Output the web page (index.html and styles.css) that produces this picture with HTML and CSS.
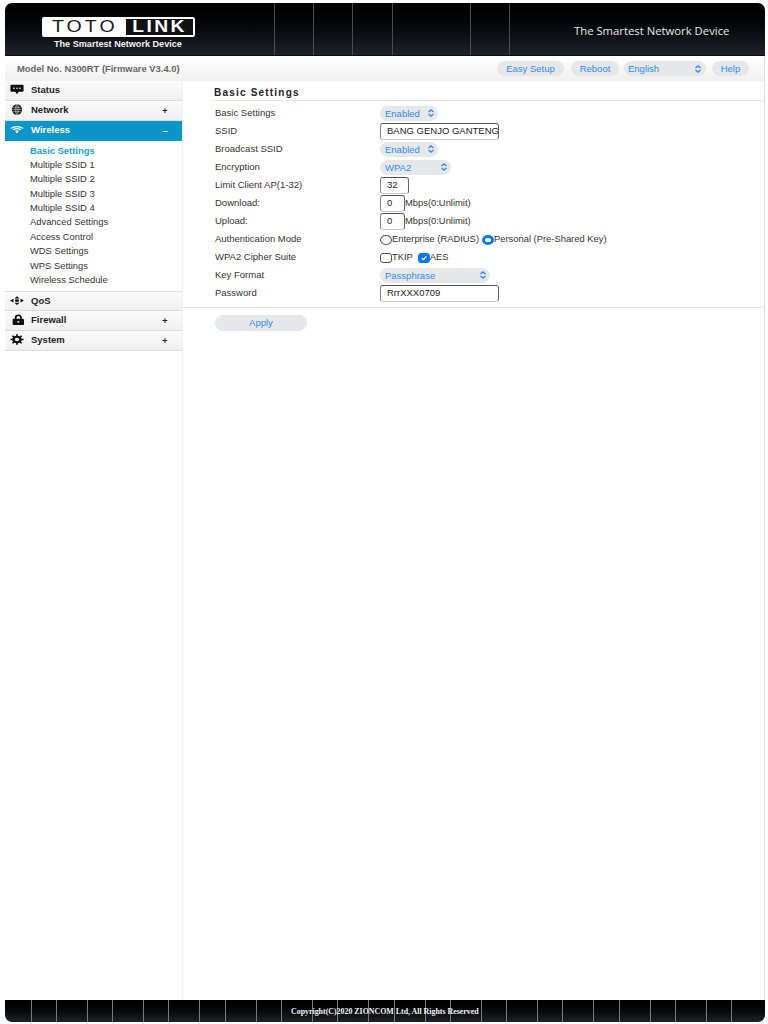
FILE: index.html
```html
<!DOCTYPE html>
<html lang="en">
<head>
<meta charset="utf-8">
<title>TOTOLINK N300RT</title>
<link rel="stylesheet" href="styles.css">
</head>
<body>
<div class="page">
  <header class="header">
    <div class="brand">
      <div class="logo"><span class="logo-toto">TOTO</span><span class="logo-link"><span class="logo-link-text">LINK</span></span></div>
      <div class="brand-tag">The Smartest Network Device</div>
    </div>
    <div class="header-lines"><i></i><i></i><i></i><i></i><i class="double"></i><i></i></div>
    <div class="header-tag">The Smartest Network Device</div>
  </header>

  <div class="toolbar">
    <div class="model">Model No. N300RT (Firmware V3.4.0)</div>
    <div class="actions">
      <span class="pill pill-setup">Easy Setup</span>
      <span class="pill pill-reboot">Reboot</span>
      <span class="pill pill-lang">English<svg class="updown" viewBox="0 0 8 8"><path d="M1.500 3 4 1l2.500 2M1.500 5 4 7l2.500-2"/></svg></span>
      <span class="pill pill-help">Help</span>
    </div>
  </div>

  <div class="main">
    <nav class="sidebar">
      <div class="nav-item">
        <svg class="nav-icon" viewBox="0 0 16 14" preserveAspectRatio="none"><path class="fill" d="M1.500 1h13a1 1 0 0 1 1 1v7a1 1 0 0 1-1 1H10l-2 3-2-3H1.500a1 1 0 0 1-1-1V2a1 1 0 0 1 1-1z"/><circle class="hole" cx="4.500" cy="5.500" r="1"/><circle class="hole" cx="8" cy="5.500" r="1"/><circle class="hole" cx="11.500" cy="5.500" r="1"/></svg>
        <span class="nav-label">Status</span>
      </div>
      <div class="nav-item">
        <svg class="nav-icon" viewBox="0 0 16 16" preserveAspectRatio="xMidYMid meet"><circle class="fill" cx="8" cy="8" r="7.500"/><path class="grid" d="M.5 8h15M1.300 4.800h13.400M1.300 11.200h13.400M8 .5v15M8 .5C4.500 4 4.500 12 8 15.500M8 .5c3.500 3.500 3.500 11.500 0 15"/></svg>
        <span class="nav-label">Network</span><span class="nav-sign">+</span>
      </div>
      <div class="nav-item nav-active">
        <svg class="nav-icon" viewBox="0 0 16 12" preserveAspectRatio="none"><g transform="translate(0 1.500) scale(1 .72)"><path class="wifi" d="M1 4.500C5 1 11 1 15 4.500M3.500 6.700c2.700-2 6.300-2 9 0M6 8.900c1.300-.8 2.700-.8 4 0"/><circle class="wifi-dot" cx="8" cy="10.600" r="1.200"/></g></svg>
        <span class="nav-label">Wireless</span><span class="nav-sign">–</span>
      </div>
      <ul class="submenu">
        <li class="current">Basic Settings</li>
        <li>Multiple SSID 1</li>
        <li>Multiple SSID 2</li>
        <li>Multiple SSID 3</li>
        <li>Multiple SSID 4</li>
        <li>Advanced Settings</li>
        <li>Access Control</li>
        <li>WDS Settings</li>
        <li>WPS Settings</li>
        <li>Wireless Schedule</li>
      </ul>
      <div class="nav-item nav-first">
        <svg class="nav-icon" viewBox="0 0 16 14" preserveAspectRatio="none"><g transform="translate(0 1.500) scale(1 .8)"><path class="fill" d="M8 0l3 3.500H5zM8 14l-3-3.500h6zM0 7l4-3v6zM16 7l-4-3v6z"/><rect class="fill" x="6" y="5" width="4" height="4"/></g></svg>
        <span class="nav-label">QoS</span>
      </div>
      <div class="nav-item">
        <svg class="nav-icon" viewBox="0 0 16 14" preserveAspectRatio="none"><path class="ring" d="M6.500 7V4.500a3 3 0 0 1 6 0V7"/><rect class="fill" x="3" y="6" width="13" height="8" rx="1"/><circle class="hole" cx="9.500" cy="10" r="1.200"/></svg>
        <span class="nav-label">Firewall</span><span class="nav-sign">+</span>
      </div>
      <div class="nav-item">
        <svg class="nav-icon" viewBox="0 0 16 16" preserveAspectRatio="none"><path class="gear" d="M8 2.500a5.500 5.500 0 1 0 0 11 5.500 5.500 0 0 0 0-11z"/><path class="teeth" d="M8 .5v3M8 12.500v3M.5 8h3M12.500 8h3M2.700 2.700l2.100 2.100M11.200 11.200l2.100 2.100M13.300 2.700l-2.100 2.100M4.800 11.200l-2.100 2.100"/><circle class="hole" cx="8" cy="8" r="2.500"/></svg>
        <span class="nav-label">System</span><span class="nav-sign">+</span>
      </div>
    </nav>

    <main class="content">
      <h1 class="title">Basic Settings</h1>
      <form class="form">
        <div class="row"><span class="label">Basic Settings</span><span class="select sel-short">Enabled<svg class="updown" viewBox="0 0 8 8"><path d="M1.500 3 4 1l2.500 2M1.500 5 4 7l2.500-2"/></svg></span></div>
        <div class="row"><span class="label">SSID</span><span class="input input-wide">BANG GENJO GANTENG</span></div>
        <div class="row"><span class="label">Broadcast SSID</span><span class="select sel-short">Enabled<svg class="updown" viewBox="0 0 8 8"><path d="M1.500 3 4 1l2.500 2M1.500 5 4 7l2.500-2"/></svg></span></div>
        <div class="row"><span class="label">Encryption</span><span class="select sel-mid">WPA2<svg class="updown" viewBox="0 0 8 8"><path d="M1.500 3 4 1l2.500 2M1.500 5 4 7l2.500-2"/></svg></span></div>
        <div class="row"><span class="label">Limit Client AP(1-32)</span><span class="input input-limit">32</span></div>
        <div class="row"><span class="label">Download:</span><span class="input input-num">0</span><span class="text">Mbps(0:Unlimit)</span></div>
        <div class="row"><span class="label">Upload:</span><span class="input input-num">0</span><span class="text">Mbps(0:Unlimit)</span></div>
        <div class="row"><span class="label">Authentication Mode</span><span class="radio"></span><span class="text">Enterprise (RADIUS)</span><span class="radio radio-on"></span><span class="text">Personal (Pre-Shared Key)</span></div>
        <div class="row"><span class="label">WPA2 Cipher Suite</span><span class="check"></span><span class="text">TKIP</span><span class="check check-on"><svg viewBox="0 0 12 12"><path d="M2.800 6.200 5.200 8.600 9.500 3.500"/></svg></span><span class="text">AES</span></div>
        <div class="row"><span class="label">Key Format</span><span class="select sel-long">Passphrase<svg class="updown" viewBox="0 0 8 8"><path d="M1.500 3 4 1l2.500 2M1.500 5 4 7l2.500-2"/></svg></span></div>
        <div class="row"><span class="label">Password</span><span class="input input-wide">RrrXXX0709</span></div>
      </form>
      <div class="apply-row"><span class="apply">Apply</span></div>
    </main>
  </div>

  <footer class="footer">
    <div class="footer-lines"><i></i><i></i><i></i><i></i><i></i><i></i><i></i><i></i><i></i><i></i><i></i><i></i><i></i><i></i><i></i><i></i><i></i><i></i><i></i><i></i><i></i><i></i><i></i><i></i><i></i><i></i></div>
    <div class="copyright">Copyright(C)2020 ZIONCOM Ltd, All Rights Reserved</div>
  </footer>
</div>
</body>
</html>
```
FILE: styles.css
```css
* { box-sizing: border-box; }
html, body { margin: 0; padding: 0; background: #fff; }
body {
  font-family: "Liberation Sans", Arial, sans-serif;
  font-size: 9.5px;
  color: #333;
}
.page {
  width: 760px;
  height: 1022px;
  margin: 0 0 0 5px;
  padding-top: 3px;
  display: flex;
  flex-direction: column;
}

/* Header */
.header {
  height: 53px;
  flex: none;
  display: flex;
  align-items: stretch;
  border-radius: 7px 7px 0 0;
  background: linear-gradient(#000 0%, #05070a 45%, #1d2329 100%);
  border-bottom: 1px solid #0c0c0c;
  overflow: hidden;
}
.brand { width: 269px; flex: none; padding: 14px 0 0 37px; }
.logo {
  width: 153px;
  height: 20px;
  background: #fff;
  border-radius: 2px;
  display: flex;
  align-items: center;
  padding: 2px 2px 2px 10px;
  font-weight: bold;
}
.logo-toto {
  flex: 1;
  color: #1a1a1a;
  font-size: 16px;
  font-weight: normal;
  letter-spacing: 2.500px;
  transform: scaleX(1.220);
  transform-origin: left center;
}
.logo-link {
  width: 67px;
  height: 16px;
  background: #111;
  color: #fff;
  font-size: 16px;
  line-height: 16px;
  text-align: center;
}
.logo-link-text {
  display: block;
  letter-spacing: 2px;
  transform: scaleX(1.2);
}
.brand-tag {
  margin: 2px 0 0 12px;
  color: #f2f2f2;
  font-size: 9.100px;
  font-weight: bold;
  white-space: nowrap;
}
.header-lines {
  width: 236px;
  flex: none;
  display: flex;
  gap: 38.400px;
}
.header-lines i { width: 1px; background: #4a4d50; display: block; }
.header-lines .double { margin-left: 39.400px; }
.header-tag {
  padding: 20px 0 0 64px;
  color: #e8e8e8;
  font-family: "Open Sans", sans-serif;
  font-size: 11.300px;
  line-height: 15px;
  white-space: nowrap;
}

/* Toolbar */
.toolbar {
  height: 25px;
  flex: none;
  display: flex;
  align-items: center;
  justify-content: space-between;
  padding: 0 15px 0 12px;
  background: linear-gradient(#fff, #f0f0f0);
  border-right: 1px solid #ddd;
}
.model { color: #666; font-weight: bold; font-size: 9.400px; }
.actions { display: flex; gap: 7px; align-items: center; }
.pill {
  height: 15px;
  border-radius: 8px;
  background: #e6e7e9;
  color: #2f8cf5;
  font-size: 9.500px;
  line-height: 15px;
  text-align: center;
  display: block;
}
.pill-setup { width: 67px; }
.pill-reboot { width: 48px; }
.pill-lang {
  width: 82px;
  margin-left: -2px;
  padding: 0 4px;
  display: flex;
  align-items: center;
  justify-content: space-between;
}
.pill-help { width: 37px; margin-left: -1px; }
.updown {
  width: 8px;
  height: 8px;
  fill: none;
  stroke: #2f8cf5;
  stroke-width: 1.400;
  flex: none;
}

/* Main layout */
.main { flex: 1; display: flex; min-height: 0; }
.sidebar {
  width: 178px;
  flex: none;
  border-right: 1px solid #f1f1f1;
}
.nav-item {
  height: 20px;
  display: flex;
  align-items: center;
  padding: 0 10px 2px 5px;
  background: linear-gradient(#fbfbfb, #f0f0f0);
  border-bottom: 1px solid #dcdcdc;
  color: #222;
  font-weight: bold;
  font-size: 9.500px;
}
.nav-first { border-top: 1px solid #e0e0e0; }
.nav-active {
  background: #0a96c8;
  color: #fff;
  border-bottom-color: #0a96c8;
}
.nav-icon { width: 14px; height: 11px; flex: none; margin-right: 7px; }
.nav-label { flex: 1; }
.nav-sign {
  width: 14px;
  text-align: center;
  font-size: 9px;
  line-height: 9px;
  position: relative;
  top: 2px;
}
.fill { fill: #111; }
.hole { fill: #f5f5f5; }
.grid { fill: none; stroke: #f5f5f5; stroke-width: .7; }
.wifi { fill: none; stroke: #fff; stroke-width: 1.700; }
.wifi-dot { fill: #fff; }
.ring { fill: none; stroke: #111; stroke-width: 2; }
.gear { fill: #111; }
.teeth { fill: none; stroke: #111; stroke-width: 2; }
.submenu {
  list-style: none;
  margin: 0;
  padding: 2.500px 0 3px 25px;
  height: 150px;
}
.submenu li {
  height: 14.400px;
  line-height: 14.400px;
  color: #333;
  font-size: 9.400px;
}
.submenu .current { color: #12a0d8; font-weight: bold; }

/* Content */
.content {
  flex: 1;
  border-right: 1px solid #ddd;
  min-width: 0;
}
.title {
  margin: 0 0 0 28px;
  height: 20px;
  padding: 5px 0 0 3px;
  border-bottom: 1px solid #e4e4e4;
  color: #222;
  font-size: 10px;
  line-height: 13px;
  letter-spacing: 1.200px;
  font-weight: bold;
}
.form { padding: 3px 0 5px 32px; }
.row {
  height: 18px;
  display: flex;
  align-items: center;
  white-space: nowrap;
}
.label { width: 165px; flex: none; color: #333; padding-bottom: 1px; }
.select {
  height: 15px;
  border-radius: 8px;
  background: #e6e7e9;
  color: #2f8cf5;
  display: flex;
  align-items: center;
  justify-content: space-between;
  padding: 0 3px 0 5px;
  font-size: 9.500px;
}
.sel-short { width: 58px; }
.sel-mid { width: 71px; }
.sel-long { width: 110px; }
.input {
  height: 17px;
  border: 1px solid #c8c8c8;
  border-top-color: #555;
  border-left-color: #888;
  border-right-color: #666;
  border-radius: 3px;
  background: #fff;
  color: #222;
  line-height: 13px;
  padding-left: 6px;
  font-size: 9.500px;
}
.input-wide { width: 119px; }
.input-limit { width: 29px; }
.input-num { width: 25px; }
.text { color: #333; font-size: 9.400px; position: relative; top: -1px; }
.radio, .check {
  width: 12px;
  height: 10px;
  flex: none;
  display: block;
  border: 1px solid #555;
  background: #fff;
  position: relative;
  top: 1px;
}
.radio { border-radius: 50%; }
.radio + .text + .radio { margin-left: 3px; }
.radio-on { border: 3px solid #0a76f0; }
.check { border-radius: 3px; }
.check + .text + .check { margin-left: 5px; }
.check-on { background: #0a76f0; border-color: #0a76f0; }
.check-on svg { display: block; width: 100%; height: 100%; fill: none; stroke: #fff; stroke-width: 1.800; }
.apply-row {
  border-top: 1px solid #e4e4e4;
  padding: 7px 0 0 32px;
}
.apply {
  display: block;
  width: 92px;
  height: 16px;
  border-radius: 8px;
  background: #e6e7e9;
  color: #2f8cf5;
  line-height: 16px;
  text-align: center;
}

/* Footer */
.footer {
  height: 22px;
  flex: none;
  position: relative;
  background: linear-gradient(#000 0%, #06080b 50%, #1d2329 100%);
  border-radius: 0 0 7px 7px;
  overflow: hidden;
}
.footer-lines { display: flex; height: 100%; padding-left: 25.500px; }
.footer-lines i { width: 1px; flex: none; display: block; background: #77797b; margin-right: 24.300px; }
.footer-lines i:nth-child(even) { margin-right: 30px; }
.copyright {
  position: absolute;
  left: 286px;
  top: 6px;
  color: #f4f4f4;
  font-family: "Liberation Serif", "Times New Roman", serif;
  font-weight: bold;
  font-size: 7.900px;
  line-height: 11px;
  white-space: nowrap;
}
```
